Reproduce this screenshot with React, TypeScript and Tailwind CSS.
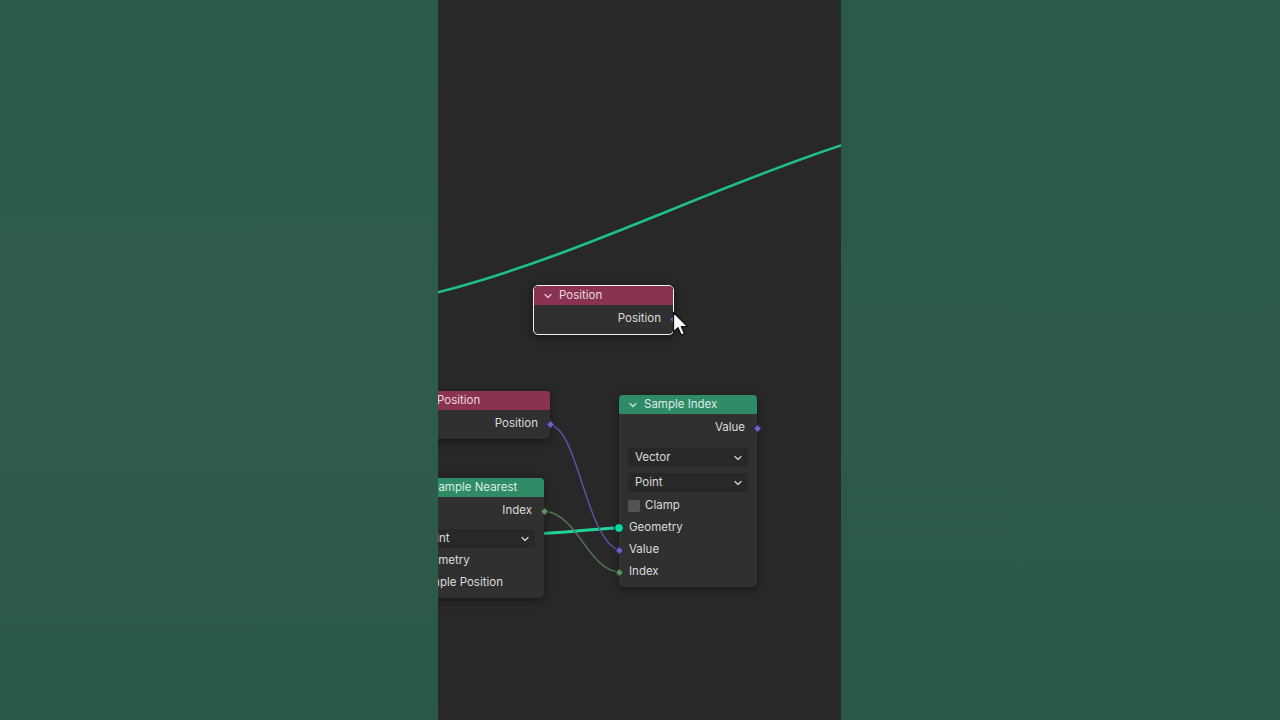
import React from 'react'

type SocketKind = 'vector' | 'int' | 'geo'

function Socket({ kind, side }: { kind: SocketKind; side: 'left' | 'right' }) {
  const pos = side === 'left' ? 'left-0 -translate-x-1/2' : 'right-0 translate-x-1/2'
  if (kind === 'geo') {
    return (
      <span
        className={`absolute top-1/2 -translate-y-1/2 ${pos} w-[10px] h-[10px] rounded-full bg-[#00d6a3] border border-[#1a1a1a]`}
      />
    )
  }
  const color = kind === 'vector' ? 'bg-[#6a63c9]' : 'bg-[#5f8f62]'
  return (
    <span
      className={`absolute top-1/2 -translate-y-1/2 ${pos} w-[10px] h-[10px] flex items-center justify-center`}
    >
      <span className={`w-[7px] h-[7px] rotate-45 ${color} border border-[#1a1a1a]`} />
    </span>
  )
}

function Chevron({ className = '' }: { className?: string }) {
  return (
    <svg className={className} width="8" height="6" viewBox="0 0 8 6" fill="none">
      <path d="M1 1.5 L4 4.5 L7 1.5" stroke="currentColor" strokeWidth="1.3" strokeLinecap="round" strokeLinejoin="round" />
    </svg>
  )
}

function Header({ title, color }: { title: string; color: 'pink' | 'green' }) {
  const bg = color === 'pink' ? 'bg-[#8a3252] text-[#e6d9de]' : 'bg-[#2e8b66] text-[#dcebe4]'
  return (
    <div className={`h-[19px] flex items-center rounded-t-[4px] ${bg}`}>
      <span className="w-[25px] flex justify-center pl-[3px]">
        <Chevron className="opacity-90" />
      </span>
      <span className="leading-none">{title}</span>
    </div>
  )
}

function OutRow({ label, kind }: { label: string; kind: SocketKind }) {
  return (
    <div className="relative h-[22px] flex items-center justify-end pr-[12px]">
      <span>{label}</span>
      <Socket kind={kind} side="right" />
    </div>
  )
}

function InRow({ label, kind }: { label: string; kind?: SocketKind }) {
  return (
    <div className="relative h-[22px] flex items-center pl-[10px]">
      <span>{label}</span>
      {kind && <Socket kind={kind} side="left" />}
    </div>
  )
}

function Dropdown({ label }: { label: string }) {
  return (
    <div className="mx-[9px] h-[19px] rounded-[3px] bg-[#282828] flex items-center justify-between pl-[7px] pr-[6px]">
      <span>{label}</span>
      <Chevron className="text-[#cfcfcf]" />
    </div>
  )
}

function Cursor() {
  return (
    <svg className="absolute left-[234px] top-[311px]" width="18" height="26" viewBox="0 0 18 26">
      <path
        d="M1.5 1.5 L1.5 21 L6 16.8 L9.2 24 L12.4 22.6 L9.3 15.6 L15.5 15.6 Z"
        fill="#ffffff"
        stroke="#111111"
        strokeWidth="1.3"
        strokeLinejoin="round"
      />
    </svg>
  )
}

function Canvas() {
  return (
    <div className="relative w-[403px] h-full bg-[#282828] overflow-hidden text-[11.5px] text-[#dcdcdc]">
      {/* links */}
      <svg className="absolute inset-0" width="403" height="720" viewBox="0 0 403 720" fill="none">
        <path
          d="M-40 302 L0 292.3 C134 258.5 269 189.2 403 145.5 L440 133"
          stroke="#1fbf8c"
          strokeWidth="2.6"
          strokeLinecap="round"
        />
        <path d="M95 534 C130 533 150 529 181 528" stroke="#1fd39b" strokeWidth="3" strokeLinecap="round" />
        <path d="M112 425 C140 428 148 540 181 550" stroke="#5a55a8" strokeWidth="1.4" />
        <path d="M106 511 C140 514 150 570 181 572" stroke="#557a58" strokeWidth="1.4" />
      </svg>

      {/* selected Position node */}
      <div className="absolute left-[95px] top-[285px] w-[141px] rounded-[5px] bg-[#303030] border border-[#f0f0f0] shadow-[0_2px_8px_rgba(0,0,0,0.45)]">
        <Header title="Position" color="pink" />
        <div className="pt-[3px] pb-[4px]">
          <OutRow label="Position" kind="vector" />
        </div>
      </div>

      {/* Position node, cut off */}
      <div className="absolute left-[-26px] top-[391px] w-[138px] rounded-[5px] bg-[#303030] shadow-[0_2px_8px_rgba(0,0,0,0.45)]">
        <Header title="Position" color="pink" />
        <div className="pt-[3px] pb-[4px]">
          <OutRow label="Position" kind="vector" />
        </div>
      </div>

      {/* Sample Nearest, cut off */}
      <div className="absolute left-[-32px] top-[478px] w-[138px] rounded-[5px] bg-[#303030] shadow-[0_2px_8px_rgba(0,0,0,0.45)]">
        <Header title="Sample Nearest" color="green" />
        <div className="pt-[3px] pb-[4px]">
          <OutRow label="Index" kind="int" />
          <div className="mt-[7px] mb-[2px]">
            <Dropdown label="Point" />
          </div>
          <InRow label="Geometry" />
          <InRow label="Sample Position" />
        </div>
      </div>

      {/* Sample Index */}
      <div className="absolute left-[181px] top-[395px] w-[138px] rounded-[5px] bg-[#303030] shadow-[0_2px_8px_rgba(0,0,0,0.45)]">
        <Header title="Sample Index" color="green" />
        <div className="pt-[3px] pb-[4px]">
          <OutRow label="Value" kind="vector" />
          <div className="mt-[9px]">
            <Dropdown label="Vector" />
          </div>
          <div className="mt-[6px]">
            <Dropdown label="Point" />
          </div>
          <div className="mt-[3px] h-[22px] flex items-center pl-[9px] gap-[5px]">
            <span className="w-[12px] h-[12px] rounded-[2px] bg-[#545454]" />
            <span>Clamp</span>
          </div>
          <InRow label="Geometry" kind="geo" />
          <InRow label="Value" kind="vector" />
          <InRow label="Index" kind="int" />
        </div>
      </div>

      <Cursor />
    </div>
  )
}

export default function App() {
  return (
    <div
      className="w-[1280px] h-[720px] flex overflow-hidden"
      style={{ fontFamily: 'Inter, "DejaVu Sans", sans-serif' }}
    >
      <div className="w-[438px] h-full bg-gradient-to-b from-[#2a5a48] via-[#2f5b4c] to-[#2a5847]" />
      <Canvas />
      <div className="flex-1 h-full bg-gradient-to-b from-[#2a5a48] via-[#2d5a4b] to-[#2a5847]" />
    </div>
  )
}
